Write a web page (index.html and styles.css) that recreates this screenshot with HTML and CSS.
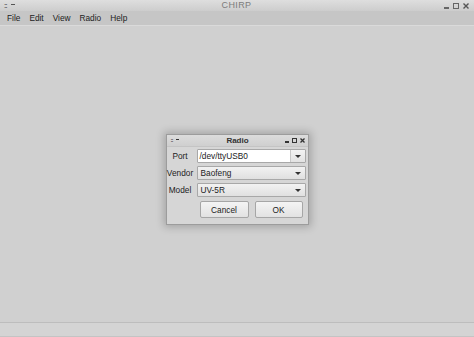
FILE: index.html
```html
<!DOCTYPE html>
<html>
<head>
<meta charset="utf-8">
<link rel="stylesheet" href="styles.css">
</head>
<body>
<div class="window">
  <div class="titlebar">
    <div class="tb-left"><span class="grip">::</span><span class="dash"></span></div>
    <div class="tb-title">CHIRP</div>
    <div class="tb-right">
      <span class="wbtn min"></span>
      <span class="wbtn max"></span>
      <span class="wbtn close">
        <svg width="6" height="6" viewBox="0 0 6 6"><path d="M0.5 0.5L5.5 5.5M5.5 0.5L0.5 5.5" stroke="#555" stroke-width="1.4"/></svg>
      </span>
    </div>
  </div>
  <div class="menubar">
    <span class="menu">File</span>
    <span class="menu">Edit</span>
    <span class="menu">View</span>
    <span class="menu">Radio</span>
    <span class="menu">Help</span>
  </div>
  <div class="main">
    <div class="dialog">
      <div class="dtitle">
        <div class="dt-left"><span class="grip small">::</span><span class="dash small"></span></div>
        <div class="dt-name">Radio</div>
        <div class="dt-right">
          <span class="dmin"></span>
          <span class="dmax"></span>
          <svg width="5" height="5" viewBox="0 0 5 5"><path d="M0.5 0.5L4.5 4.5M4.5 0.5L0.5 4.5" stroke="#333" stroke-width="1.3"/></svg>
        </div>
      </div>
      <div class="dbody">
        <div class="form">
          <div class="lbl">Port</div>
          <div class="combo edit"><span class="field">/dev/ttyUSB0</span><span class="arrowbox"><span class="arrow"></span></span></div>
          <div class="lbl">Vendor</div>
          <div class="combo"><span class="val">Baofeng</span><span class="arrow"></span></div>
          <div class="lbl">Model</div>
          <div class="combo"><span class="val">UV-5R</span><span class="arrow"></span></div>
        </div>
        <div class="buttons">
          <button class="btn">Cancel</button>
          <button class="btn ok">OK</button>
        </div>
      </div>
    </div>
  </div>
  <div class="statusbar"><span class="sleft"></span><span class="sright"></span></div>
</div>
</body>
</html>
```
FILE: styles.css
```css
html, body {
  margin: 0;
  padding: 0;
}
body {
  font-family: "Liberation Sans", Arial, sans-serif;
  font-size: 8px;
  color: #222;
  background: #d0d0d0;
}
.window {
  width: 474px;
  height: 337px;
  display: flex;
  flex-direction: column;
  overflow: hidden;
}
.titlebar {
  height: 11px;
  background: linear-gradient(#dedede, #cdcdcd);
  display: flex;
  align-items: center;
  justify-content: space-between;
}
.tb-left {
  display: flex;
  align-items: center;
  gap: 4px;
  padding-left: 4px;
  width: 60px;
}
.grip {
  font-size: 7px;
  font-weight: bold;
  color: #666;
  line-height: 7px;
  letter-spacing: -1px;
}
.dash {
  width: 4px;
  height: 1px;
  background: #555;
  margin-top: -3px;
}
.tb-title {
  flex: 1;
  text-align: center;
  color: #7c7c7c;
  font-size: 9px;
  letter-spacing: 0.4px;
  line-height: 11px;
}
.tb-right {
  width: 60px;
  display: flex;
  justify-content: flex-end;
  align-items: center;
  gap: 4px;
  padding-right: 5px;
}
.wbtn {
  width: 6px;
  height: 6px;
  display: flex;
  align-items: center;
  justify-content: center;
}
.wbtn.min::after {
  content: "";
  width: 5px;
  height: 2px;
  background: #666;
  margin-top: 4px;
}
.wbtn.max {
  box-sizing: border-box;
  border: 1.5px solid #666;
}
.menubar {
  height: 14px;
  background: #c6c6c6;
  display: flex;
  align-items: center;
  padding-left: 6px;
  border-bottom: 1px solid #dadada;
}
.menu {
  padding: 0 4px 0 1px;
  margin-right: 4px;
  color: #222;
  font-size: 8.3px;
}
.main {
  flex: 1;
  background: #d0d0d0;
  display: flex;
  justify-content: center;
  align-items: flex-start;
  padding-top: 108px;
}
.dialog {
  width: 141px;
  border: 1px solid #9c9c9c;
  background: #d6d6d6;
  box-shadow: 0 0 8px 2px rgba(0,0,0,0.22);
}
.dtitle {
  height: 11px;
  display: flex;
  align-items: center;
  background: linear-gradient(#dcdcdc, #cfcfcf);
  border-bottom: 1px solid #c4c4c4;
}
.dt-left {
  width: 30px;
  display: flex;
  align-items: center;
  gap: 3px;
  padding-left: 4px;
}
.grip.small { font-size: 6px; color: #444; }
.dash.small { width: 3px; background: #333; margin-top: -2px; }
.dt-name {
  flex: 1;
  text-align: center;
  font-weight: bold;
  color: #333;
  font-size: 8px;
}
.dt-right {
  width: 30px;
  display: flex;
  justify-content: flex-end;
  align-items: center;
  gap: 3px;
  padding-right: 3px;
}
.dmin {
  width: 4px;
  height: 1.5px;
  background: #333;
  margin-top: 3px;
}
.dmax {
  width: 5px;
  height: 5px;
  box-sizing: border-box;
  border: 1px solid #333;
}
.dbody {
  padding: 2px 2px 6px 0;
}
.form {
  display: grid;
  grid-template-columns: 27px 1fr;
  row-gap: 3px;
  column-gap: 3px;
  align-items: center;
}
.lbl {
  text-align: center;
  color: #222;
  font-size: 8.3px;
}
.combo {
  height: 14px;
  box-sizing: border-box;
  border: 1px solid #a8a8a8;
  border-radius: 1px;
  background: linear-gradient(#f2f2f2, #e0e0e0);
  display: flex;
  align-items: center;
  padding-left: 3px;
  padding-right: 4px;
  justify-content: space-between;
  font-size: 8.3px;
}
.combo.edit {
  background: #fff;
  padding: 0 0 0 2px;
}
.field { flex: 1; }
.arrowbox {
  width: 14px;
  height: 12px;
  border-left: 1px solid #c8c8c8;
  background: linear-gradient(#f2f2f2, #e2e2e2);
  display: flex;
  align-items: center;
  justify-content: center;
}
.arrow {
  width: 0;
  height: 0;
  border-left: 3px solid transparent;
  border-right: 3px solid transparent;
  border-top: 3px solid #333;
}
.buttons {
  display: flex;
  justify-content: flex-end;
  gap: 6px;
  margin-top: 4px;
  padding-right: 3px;
}
.btn {
  font-family: "Liberation Sans", Arial, sans-serif;
  font-size: 8.3px;
  color: #222;
  width: 49px;
  height: 17px;
  padding: 0;
  border: 1px solid #a6a6a6;
  border-radius: 2px;
  background: linear-gradient(#f4f4f4, #e2e2e2);
}
.btn.ok { width: 48px; }
.statusbar {
  height: 15px;
  box-sizing: border-box;
  border-top: 1px solid #bdbdbd;
  background: #d4d4d4;
  border-bottom: 1px solid #c4c4c4;
}
```
